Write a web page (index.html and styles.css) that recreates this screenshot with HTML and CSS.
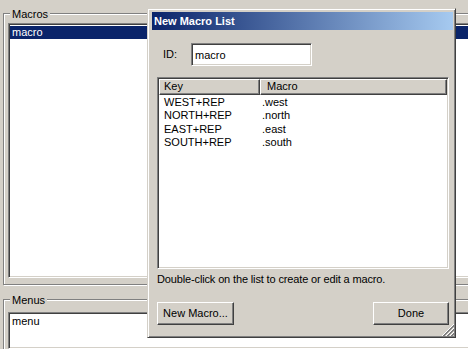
FILE: index.html
```html
<!DOCTYPE html>
<html>
<head>
<meta charset="utf-8">
<link rel="stylesheet" href="styles.css">
</head>
<body>
<div class="app">
  <div class="group macros">
    <span class="legend">Macros</span>
    <div class="list macros-list">
      <div class="item sel">macro</div>
    </div>
  </div>
  <div class="group menus">
    <span class="legend">Menus</span>
    <div class="list menus-list">
      <div class="item">menu</div>
    </div>
  </div>
</div>

<div class="dialog">
  <div class="titlebar">New Macro List</div>
  <div class="dbody">
    <div class="idrow">
      <span class="idlabel">ID:</span>
      <input class="edit" type="text" value="macro">
    </div>
    <div class="lv">
      <div class="lv-head">
        <div class="hcell hkey">Key</div>
        <div class="hcell hmacro">Macro</div>
      </div>
      <div class="lv-row"><span class="ckey">WEST+REP</span><span class="cmacro">.west</span></div>
      <div class="lv-row"><span class="ckey">NORTH+REP</span><span class="cmacro">.north</span></div>
      <div class="lv-row"><span class="ckey">EAST+REP</span><span class="cmacro">.east</span></div>
      <div class="lv-row"><span class="ckey">SOUTH+REP</span><span class="cmacro">.south</span></div>
    </div>
    <div class="hint">Double-click on the list to create or edit a macro.</div>
    <div class="buttons">
      <button class="btn btn-new">New Macro...</button>
      <button class="btn btn-done">Done</button>
    </div>
  </div>
  <svg class="grip" width="12" height="12" viewBox="0 0 12 12" shape-rendering="crispEdges">
    <g stroke-width="1">
      <line x1="0" y1="12" x2="12" y2="0" stroke="#ffffff"/>
      <line x1="1" y1="12" x2="12" y2="1" stroke="#808080"/>
      <line x1="2" y1="12" x2="12" y2="2" stroke="#808080"/>
      <line x1="4" y1="12" x2="12" y2="4" stroke="#ffffff"/>
      <line x1="5" y1="12" x2="12" y2="5" stroke="#808080"/>
      <line x1="6" y1="12" x2="12" y2="6" stroke="#808080"/>
      <line x1="8" y1="12" x2="12" y2="8" stroke="#ffffff"/>
      <line x1="9" y1="12" x2="12" y2="9" stroke="#808080"/>
      <line x1="10" y1="12" x2="12" y2="10" stroke="#808080"/>
    </g>
  </svg>
</div>
</body>
</html>
```

FILE: styles.css
```css
html, body {
  margin: 0;
  padding: 0;
}
body {
  background: #d4d0c8;
  font: 11px/13px "Liberation Sans", Arial, sans-serif;
  color: #000;
  width: 468px;
  height: 349px;
  overflow: hidden;
  position: relative;
}

.app {
  width: 468px;
  overflow: hidden;
  padding: 13px 0 0 3px;
  box-sizing: border-box;
}

.group {
  border: 1px solid #808080;
  border-right: 0;
  box-shadow: inset 1px 1px 0 #fff, 1px 1px 0 #fff;
}
.legend {
  display: block;
  width: fit-content;
  background: #d4d0c8;
  padding: 0 2px;
  margin: -6px 0 0 6px;
  line-height: 13px;
}

.macros {
  padding-bottom: 6px;
}
.menus {
  margin-top: 14px;
  border-bottom: 0;
  height: 49px;
}

.list {
  box-sizing: border-box;
  margin-left: 4px;
  background: #fff;
  border: 1px solid;
  border-right: 0;
  border-color: #808080 #fff #fff #808080;
  box-shadow: inset 1px 1px 0 #404040, inset 0 -1px 0 #d4d0c8;
  padding: 2px 0 1px 1px;
}
.macros-list {
  margin-top: 2px;
  height: 255px;
}
.menus-list {
  margin-top: 5px;
  height: 37px;
}
.item {
  height: 13px;
  padding-left: 2px;
  white-space: nowrap;
}
.item.sel {
  background: #0a246a;
  color: #fff;
}

/* dialog window */
.dialog {
  position: absolute;
  left: 147px;
  top: 8px;
  width: 309px;
  height: 330px;
  box-sizing: border-box;
  background: #d4d0c8;
  border: 1px solid;
  border-color: #d4d0c8 #404040 #404040 #d4d0c8;
  box-shadow: inset 1px 1px 0 #fff, inset -1px -1px 0 #808080;
  padding: 3px 2px 2px 4px;
}
.titlebar {
  height: 18px;
  box-sizing: border-box;
  padding: 3px 0 0 2px;
  background: linear-gradient(to right, #0a246a, #a6caf0);
  color: #fff;
  font-weight: bold;
  line-height: 13px;
  white-space: nowrap;
}
.dbody {
  display: flex;
  flex-direction: column;
  padding: 0 4px 0 5px;
}
.idrow {
  display: flex;
  align-items: center;
  margin-top: 13px;
  height: 23px;
}
.idlabel {
  width: 28px;
  margin-left: 6px;
}
.edit {
  box-sizing: border-box;
  width: 121px;
  height: 23px;
  margin: 0;
  font: inherit;
  color: #000;
  background: #fff;
  border: 1px solid;
  border-color: #808080 #fff #fff #808080;
  box-shadow: inset 1px 1px 0 #404040, inset -1px -1px 0 #d4d0c8;
  padding: 0 0 0 3px;
  outline: none;
}

.lv {
  box-sizing: border-box;
  margin-top: 11px;
  height: 192px;
  background: #fff;
  border: 1px solid;
  border-color: #808080 #fff #fff #808080;
  box-shadow: inset 1px 1px 0 #404040, inset -1px -1px 0 #d4d0c8;
  padding: 1px;
}
.lv-head {
  display: flex;
  height: 16px;
  margin-bottom: 1px;
}
.hcell {
  box-sizing: border-box;
  height: 16px;
  background: #d4d0c8;
  border: 1px solid;
  border-color: #fff #404040 #404040 #fff;
  box-shadow: inset -1px -1px 0 #808080;
  line-height: 13px;
  white-space: nowrap;
}
.hkey {
  width: 101px;
  padding-left: 4px;
}
.hmacro {
  flex: 1;
  padding-left: 6px;
}
.lv-row {
  display: grid;
  grid-template-columns: 101px 1fr;
  height: 13.4px;
  white-space: nowrap;
}
.ckey {
  padding-left: 5px;
}
.cmacro {
  padding-left: 2px;
}

.hint {
  margin-top: 4px;
  white-space: nowrap;
  letter-spacing: -0.14px;
}
.buttons {
  display: flex;
  justify-content: space-between;
  margin-top: 16px;
}
.btn {
  box-sizing: border-box;
  height: 23px;
  margin: 0;
  padding: 0;
  font: inherit;
  color: #000;
  background: #d4d0c8;
  border: 1px solid;
  border-color: #fff #404040 #404040 #fff;
  box-shadow: inset -1px -1px 0 #808080;
  border-radius: 0;
}
.btn-new {
  width: 77px;
}
.btn-done {
  width: 76px;
}
.grip {
  position: absolute;
  right: 1px;
  bottom: 1px;
  display: block;
}
```
